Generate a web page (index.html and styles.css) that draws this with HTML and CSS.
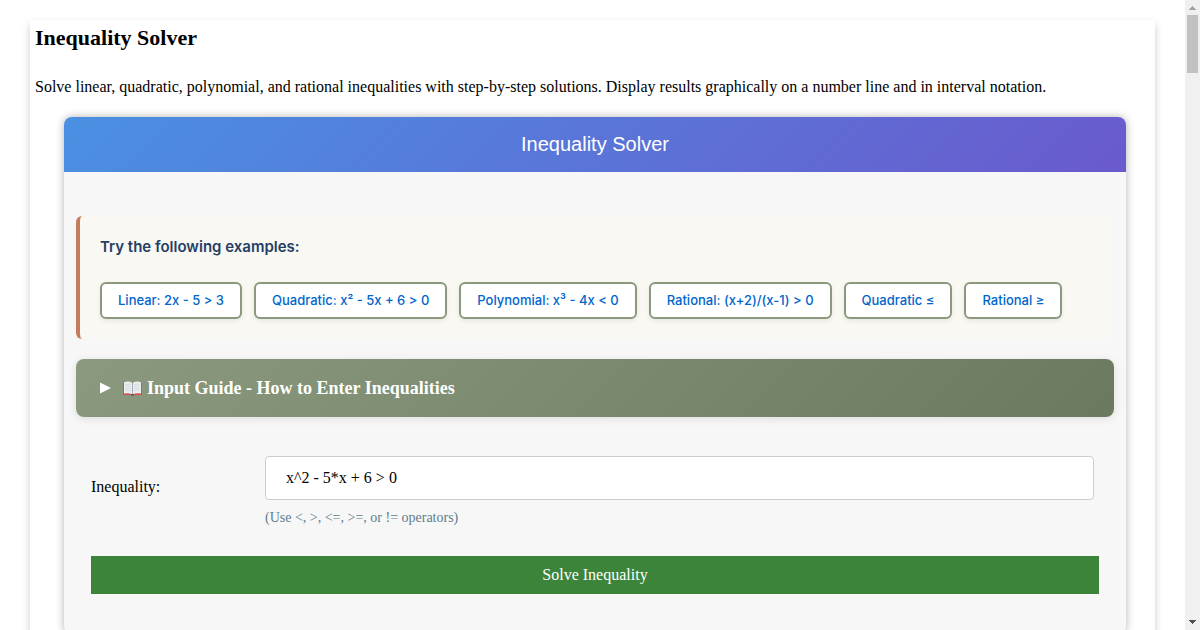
FILE: index.html
```html
<!DOCTYPE html>
<html lang="en">
<head>
<meta charset="utf-8">
<title>Inequality Solver</title>
<link rel="stylesheet" href="styles.css">
</head>
<body>
<div class="viewport">
  <main class="page">
    <h1 class="page-title">Inequality Solver</h1>
    <p class="intro">Solve linear, quadratic, polynomial, and rational inequalities with step-by-step solutions. Display results graphically on a number line and in interval notation.</p>
    <section class="card">
      <h2 class="card-header">Inequality Solver</h2>
      <div class="card-body">
        <div class="examples">
          <h3 class="examples-title">Try the following examples:</h3>
          <div class="chips">
            <button class="chip" type="button">Linear: 2x - 5 &gt; 3</button>
            <button class="chip" type="button">Quadratic: x² - 5x + 6 &gt; 0</button>
            <button class="chip" type="button">Polynomial: x³ - 4x &lt; 0</button>
            <button class="chip" type="button">Rational: (x+2)/(x-1) &gt; 0</button>
            <button class="chip" type="button">Quadratic ≤</button>
            <button class="chip" type="button">Rational ≥</button>
          </div>
        </div>
        <details class="guide">
          <summary class="guide-summary">
            <svg class="guide-arrow" viewBox="0 0 11 12" aria-hidden="true"><path d="M0 .5 11 6 0 11.5z" fill="#fff"/></svg>
            <svg class="guide-book" viewBox="0 0 19 15" aria-hidden="true">
              <path d="M0 2h19v12h-8l-1.500 1L8 14H0z" fill="#d0544d"/>
              <path d="M1 1.500Q5-.5 9.500 2 14-.5 18 1.500V12.500q-5-1-8.500 1Q6 11.500 1 12.500z" fill="#eceef0"/>
              <path d="M9.500 2v11.500" stroke="#a3adb3"/>
              <path d="M2.500 3.500q3-1 5.500 0M2.500 5.500q3-1 5.500 0M2.500 7.500q3-1 5.500 0M2.500 9.500q3-1 5.500 0M11 3.500q3-1 5.500 0M11 5.500q3-1 5.500 0M11 7.500q3-1 5.500 0M11 9.500q3-1 5.500 0" fill="none" stroke="#ccd1d5" stroke-width=".7"/>
              <path d="M8 13h3v1.500H8z" fill="#37666f"/>
            </svg>
            <span>Input Guide - How to Enter Inequalities</span>
          </summary>
        </details>
        <form class="solver">
          <div class="field">
            <label class="field-label" for="inequality">Inequality:</label>
            <div class="field-control">
              <input class="field-input" id="inequality" type="text" value="x^2 - 5*x + 6 &gt; 0">
              <small class="field-hint">(Use &lt;, &gt;, &lt;=, &gt;=, or != operators)</small>
            </div>
          </div>
          <button class="solve" type="button">Solve Inequality</button>
        </form>
      </div>
    </section>
  </main>
</div>
<div class="scrollbar" aria-hidden="true">
  <svg class="scroll-arrow" viewBox="0 0 7 4"><path d="M3 0h1v1h1v1h1v1h1v1H0V3h1V2h1V1h1z" fill="#a3a3a3"/></svg>
  <div class="scroll-track"><div class="scroll-thumb"></div></div>
  <svg class="scroll-arrow" viewBox="0 0 7 4"><path d="M0 0h7v1H6v1H5v1H4v1H3V3H2V2H1V1H0z" fill="#505050"/></svg>
</div>
</body>
</html>
```

FILE: styles.css
```css
* { box-sizing: border-box; }
body {
  margin: 0;
  height: 100vh;
  display: flex;
  overflow: hidden;
  background: #fff;
  color: #000;
  font: 16px/24px "Liberation Serif", serif;
}
h1, h2, h3, p { margin: 0; }
.viewport { flex: 1; min-width: 0; overflow: hidden; padding: 20px 30px; }
.page {
  min-height: 100vh;
  padding: 5px 5px 40px;
  box-shadow: 0 4px 8px rgba(0, 0, 0, .2);
}
.page-title { font-size: 22px; line-height: 26px; font-weight: 700; }
.intro { margin: 24px 0 18px; }
.card {
  margin: 0 24px 0 29px;
  border-radius: 8px;
  background: #f7f7f7;
  box-shadow: 0 0 8px rgba(0, 0, 0, .3);
}
.card-header {
  padding: 15px;
  border-radius: 8px 8px 0 0;
  background: linear-gradient(135deg, #4a90e2, #6a5acd);
  color: #fff;
  font: 400 20px/25px "Liberation Sans", sans-serif;
  text-align: center;
}
.card-body { padding: 44px 12px 40px; }
.examples {
  padding: 20px;
  border-left: 4px solid #c67b5c;
  border-radius: 6px;
  background: #faf8f3;
}
.examples-title {
  margin-bottom: 24px;
  color: #243f66;
  font: 600 15px/22px Inter, sans-serif;
}
.chips { display: flex; flex-wrap: wrap; gap: 12px; }
.chip {
  padding: 8px 16px;
  border: 2px solid #8b9a7e;
  border-radius: 6px;
  background: #fff;
  color: #0066cc;
  font: 500 13px/17px Inter, sans-serif;
  box-shadow: 0 2px 4px rgba(0, 0, 0, .08);
}
.guide {
  margin-top: 20px;
  border-radius: 8px;
  background: linear-gradient(135deg, #8b9a7e, #6b7a5e);
  color: #fff;
  box-shadow: 0 2px 8px rgba(0, 0, 0, .1);
}
.guide-summary {
  display: flex;
  align-items: center;
  padding: 16px 24px;
  font: 700 18px/26px "Liberation Serif", serif;
  list-style: none;
}
.guide-arrow { width: 11px; height: 12px; margin-right: 12px; }
.guide-book { width: 19px; height: 15px; margin-right: 5px; }
.solver { margin-top: 39px; padding: 0 15px; }
.field {
  display: grid;
  grid-template-columns: 174px 1fr;
  align-items: center;
  padding-right: 5px;
}
.field-label { padding-bottom: 10px; }
.field-control { display: flex; flex-direction: column; gap: 8px; }
.field-input {
  width: 100%;
  height: 44px;
  padding: 0 20px;
  border: 1px solid #ccc;
  border-radius: 4px;
  background: #fff;
  color: #000;
  font: 16px "Liberation Serif", serif;
}
.field-hint { color: #607d8b; font-size: 14px; line-height: 20px; }
.solve {
  display: block;
  width: 100%;
  margin-top: 28px;
  padding: 8px;
  border: 0;
  background: #3c8439;
  color: #fff;
  font: 16px/22px "Liberation Serif", serif;
}
.scrollbar {
  width: 15px;
  display: flex;
  flex-direction: column;
  align-items: center;
  padding: 6px 2px;
  background: #f0f0f0;
}
.scroll-arrow { width: 7px; height: 4px; }
.scroll-track { flex: 1; align-self: stretch; padding-top: 5px; }
.scroll-thumb { height: 58px; background: #c1c1c1; }
```
